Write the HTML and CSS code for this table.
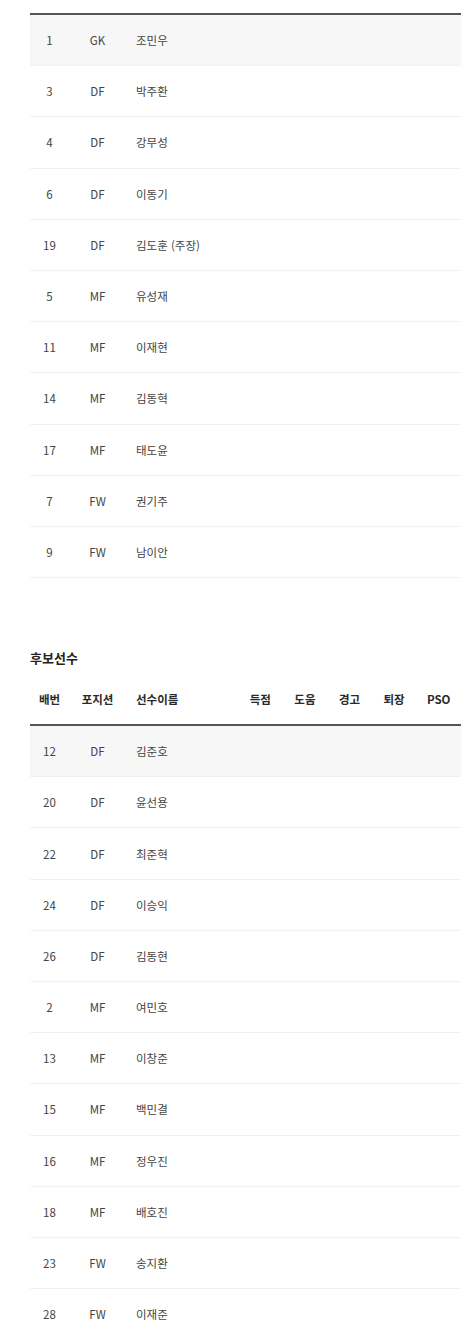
FILE: index.html
```html
<!DOCTYPE html>
<html lang="ko">
<head>
<meta charset="utf-8">
<link rel="stylesheet" href="styles.css">
</head>
<body>
<table class="roster first">
  <colgroup><col class="c-no"><col class="c-pos"><col class="c-name"><col class="c-st"><col class="c-st"><col class="c-st"><col class="c-st"><col class="c-st"></colgroup>
  <tbody>
    <tr class="hl"><td>1</td><td>GK</td><td class="nm">조민우</td><td></td><td></td><td></td><td></td><td></td></tr>
    <tr><td>3</td><td>DF</td><td class="nm">박주환</td><td></td><td></td><td></td><td></td><td></td></tr>
    <tr><td>4</td><td>DF</td><td class="nm">강무성</td><td></td><td></td><td></td><td></td><td></td></tr>
    <tr><td>6</td><td>DF</td><td class="nm">이동기</td><td></td><td></td><td></td><td></td><td></td></tr>
    <tr><td>19</td><td>DF</td><td class="nm">김도훈 (주장)</td><td></td><td></td><td></td><td></td><td></td></tr>
    <tr><td>5</td><td>MF</td><td class="nm">유성재</td><td></td><td></td><td></td><td></td><td></td></tr>
    <tr><td>11</td><td>MF</td><td class="nm">이재현</td><td></td><td></td><td></td><td></td><td></td></tr>
    <tr><td>14</td><td>MF</td><td class="nm">김동혁</td><td></td><td></td><td></td><td></td><td></td></tr>
    <tr><td>17</td><td>MF</td><td class="nm">태도윤</td><td></td><td></td><td></td><td></td><td></td></tr>
    <tr><td>7</td><td>FW</td><td class="nm">권기주</td><td></td><td></td><td></td><td></td><td></td></tr>
    <tr><td>9</td><td>FW</td><td class="nm">남이안</td><td></td><td></td><td></td><td></td><td></td></tr>
  </tbody>
</table>

<h3 class="sub-title">후보선수</h3>

<table class="roster">
  <colgroup><col class="c-no"><col class="c-pos"><col class="c-name"><col class="c-st"><col class="c-st"><col class="c-st"><col class="c-st"><col class="c-st"></colgroup>
  <thead>
    <tr><th>배번</th><th>포지션</th><th class="nm">선수이름</th><th>득점</th><th>도움</th><th>경고</th><th>퇴장</th><th>PSO</th></tr>
  </thead>
  <tbody>
    <tr class="hl"><td>12</td><td>DF</td><td class="nm">김준호</td><td></td><td></td><td></td><td></td><td></td></tr>
    <tr><td>20</td><td>DF</td><td class="nm">윤선용</td><td></td><td></td><td></td><td></td><td></td></tr>
    <tr><td>22</td><td>DF</td><td class="nm">최준혁</td><td></td><td></td><td></td><td></td><td></td></tr>
    <tr><td>24</td><td>DF</td><td class="nm">이승익</td><td></td><td></td><td></td><td></td><td></td></tr>
    <tr><td>26</td><td>DF</td><td class="nm">김동현</td><td></td><td></td><td></td><td></td><td></td></tr>
    <tr><td>2</td><td>MF</td><td class="nm">여민호</td><td></td><td></td><td></td><td></td><td></td></tr>
    <tr><td>13</td><td>MF</td><td class="nm">이창준</td><td></td><td></td><td></td><td></td><td></td></tr>
    <tr><td>15</td><td>MF</td><td class="nm">백민결</td><td></td><td></td><td></td><td></td><td></td></tr>
    <tr><td>16</td><td>MF</td><td class="nm">정우진</td><td></td><td></td><td></td><td></td><td></td></tr>
    <tr><td>18</td><td>MF</td><td class="nm">배호진</td><td></td><td></td><td></td><td></td><td></td></tr>
    <tr><td>23</td><td>FW</td><td class="nm">송지환</td><td></td><td></td><td></td><td></td><td></td></tr>
    <tr><td>28</td><td>FW</td><td class="nm">이재준</td><td></td><td></td><td></td><td></td><td></td></tr>
  </tbody>
</table>
</body>
</html>
```

FILE: styles.css
```css
html, body {
  margin: 0;
  padding: 0;
  background: #fff;
}
body {
  padding: 13px 13px 0 30px;
  font-family: "Noto Sans CJK KR", "Noto Sans", sans-serif;
  color: #444;
  font-size: 11.5px;
}
.roster {
  width: 431px;
  border-collapse: collapse;
  table-layout: fixed;
}
.c-no { width: 39px; }
.c-pos { width: 57px; }
.c-name { width: 112px; }
.c-st { width: 44.6px; }
.roster.first {
  border-top: 2px solid #555;
}
.roster td,
.roster th {
  height: 50.2px;
  padding: 0;
  text-align: center;
  vertical-align: middle;
  line-height: 16px;
}
.roster td {
  border-bottom: 1px solid #f1f1f1;
  color: #444;
  font-weight: 400;
}
.roster th {
  font-weight: 700;
  color: #2a2a2a;
  height: 51px;
  border-bottom: 2px solid #555;
}
.roster .nm {
  text-align: left;
  padding-left: 10px;
}
.roster tr.hl td {
  background: #f7f7f7;
}
.sub-title {
  margin: 70px 0 5px;
  font-size: 13px;
  line-height: 20px;
  font-weight: 700;
  color: #222;
}
```
